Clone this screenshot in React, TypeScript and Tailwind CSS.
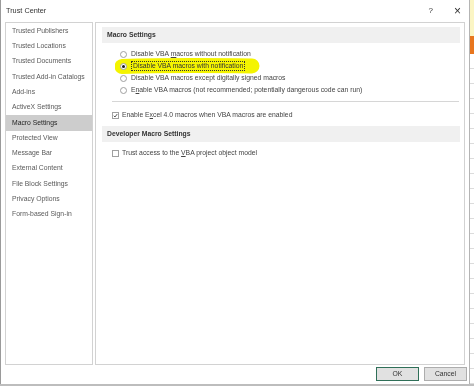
const navItems = [
  'Trusted Publishers',
  'Trusted Locations',
  'Trusted Documents',
  'Trusted Add-in Catalogs',
  'Add-ins',
  'ActiveX Settings',
  'Macro Settings',
  'Protected View',
  'Message Bar',
  'External Content',
  'File Block Settings',
  'Privacy Options',
  'Form-based Sign-in',
]

function Radio({ checked }: { checked?: boolean }) {
  return (
    <span className="flex h-[7px] w-[7px] shrink-0 items-center justify-center rounded-full border border-[#a0a0a0] bg-white">
      {checked && <span className="h-[3px] w-[3px] rounded-full bg-[#1a1a1a]" />}
    </span>
  )
}

function Check({ checked }: { checked?: boolean }) {
  return (
    <span className="flex h-[7px] w-[7px] shrink-0 items-center justify-center border border-[#a0a0a0] bg-white">
      {checked && (
        <svg width="5" height="5" viewBox="0 0 10 10">
          <path d="M1.5 5.5 L4 8 L8.5 2" fill="none" stroke="#333" strokeWidth="1.6" />
        </svg>
      )}
    </span>
  )
}

function SectionBar({ children }: { children: React.ReactNode }) {
  return (
    <div className="flex h-[16px] items-center bg-[#f0f0f0] pl-[5px] font-bold text-[#333]">
      {children}
    </div>
  )
}

export default function App() {
  return (
    <div
      className="flex h-[386px] w-[474px] flex-col overflow-hidden bg-[#c6c6c6] text-[6.8px] leading-none text-[#444]"
      style={{ fontFamily: '"Liberation Sans", Arial, sans-serif' }}
    >
      <div className="flex h-[384px]">
        {/* dialog */}
        <div className="flex h-full w-[470px] flex-col border-x border-l-[#9a9a9a] border-r-[#b4b4b4] bg-white">
          {/* title bar */}
          <div className="flex h-[22px] items-center pl-[5px] text-[#333]">
            <span className="text-[7.3px]">Trust Center</span>
            <span className="ml-auto text-[8px]">?</span>
            <span className="ml-[21px] mr-[8px] text-[12px] font-light leading-none">×</span>
          </div>

          {/* body */}
          <div className="flex h-[343px] gap-[2px] px-[4px]">
            {/* nav */}
            <div className="flex w-[88px] flex-col border border-[#d2d2d2] pt-[0.5px]">
              {navItems.map((item) => (
                <div
                  key={item}
                  className={`flex h-[15.3px] items-center pl-[6px] ${
                    item === 'Macro Settings' ? 'bg-[#cdcdcd] text-[#262626]' : 'text-[#5a5a5a]'
                  }`}
                >
                  {item}
                </div>
              ))}
            </div>

            {/* content */}
            <div className="flex flex-1 flex-col border border-[#d2d2d2] pl-[6px] pr-[4px] pt-[4px]">
              <SectionBar>Macro Settings</SectionBar>

              <div className="relative mt-[5px] flex flex-col">
                <svg className="pointer-events-none absolute left-[13px] top-[9px] mix-blend-multiply" width="146" height="18" viewBox="0 0 146 18">
                  <path d="M7 9.5 C 40 8.5, 100 8.5, 137 9" fill="none" stroke="#f4f400" strokeWidth="15" strokeLinecap="round" />
                </svg>
                <div className="flex h-[12px] items-center gap-[4px] pl-[18px]">
                  <Radio />
                  <span>
                    Disable VBA <span className="underline">m</span>acros without notification
                  </span>
                </div>
                <div className="relative flex h-[12px] items-center gap-[4px] pl-[18px]">
                  <Radio checked />
                  <span className="border border-dotted border-[#333] px-[1px] py-[1px] text-[#333]">
                    Disable VBA macros with notification
                  </span>
                </div>
                <div className="flex h-[12px] items-center gap-[4px] pl-[18px]">
                  <Radio />
                  <span>Disable VBA macros except digitally signed macros</span>
                </div>
                <div className="flex h-[12px] items-center gap-[4px] pl-[18px]">
                  <Radio />
                  <span>
                    E<span className="underline">n</span>able VBA macros (not recommended; potentially dangerous code can run)
                  </span>
                </div>
              </div>

              <div className="ml-[10px] mr-[1px] mt-[5px] border-t border-[#d6d6d6]" />

              <div className="mt-[7px] flex h-[12px] items-center gap-[3px] pl-[10px]">
                <Check checked />
                <span>
                  Enable E<span className="underline">x</span>cel 4.0 macros when VBA macros are enabled
                </span>
              </div>

              <div className="mt-[5px]">
                <SectionBar>Developer Macro Settings</SectionBar>
              </div>

              <div className="mt-[5px] flex h-[12px] items-center gap-[3px] pl-[10px]">
                <Check />
                <span>
                  Trust access to the <span className="underline">V</span>BA project object model
                </span>
              </div>
            </div>
          </div>

          {/* footer */}
          <div className="flex justify-end gap-[5px] pr-[2px] pt-[2px]">
            <button className="flex h-[14px] w-[43px] items-center justify-center border border-[#2f6f58] bg-[#e1e1e1] text-[#333] outline outline-1 -outline-offset-2 outline-[#e1e1e1]">
              OK
            </button>
            <button className="flex h-[14px] w-[43px] items-center justify-center border border-[#adadad] bg-[#e1e1e1] text-[#333]">
              Cancel
            </button>
          </div>
        </div>

        {/* excel window behind */}
        <div className="flex flex-1 flex-col bg-white">
          <div className="h-[38px] bg-[#fbf5c4]" />
          <div className="h-[19px] bg-[#e8761e]" />
          <div className="flex flex-1 flex-col">
            {Array.from({ length: 22 }).map((_, i) => (
              <div key={i} className="h-[15px] border-b border-[#dcdcdc]" />
            ))}
          </div>
        </div>
      </div>
      <div className="flex-1 bg-[#bdbdbd]" />
    </div>
  )
}
